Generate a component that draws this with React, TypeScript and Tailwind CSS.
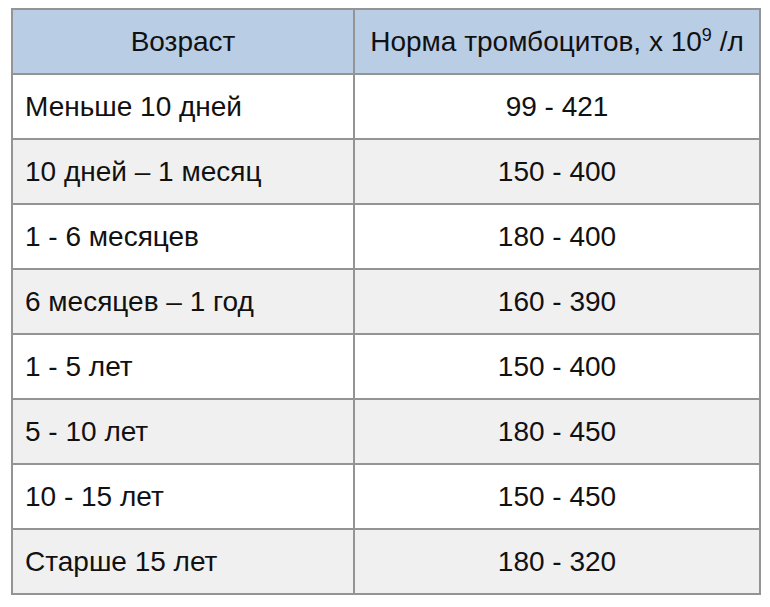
import React from "react";

const rows: [string, string][] = [
  ["Меньше 10 дней", "99 - 421"],
  ["10 дней – 1 месяц", "150 - 400"],
  ["1 - 6 месяцев", "180 - 400"],
  ["6 месяцев – 1 год", "160 - 390"],
  ["1 - 5 лет", "150 - 400"],
  ["5 - 10 лет", "180 - 450"],
  ["10 - 15 лет", "150 - 450"],
  ["Старше 15 лет", "180 - 320"],
];

export default function App() {
  return (
    <div className="w-[770px] h-[607px] bg-white pt-[8px] pl-[11px] text-[#111111]" style={{ fontFamily: '"Liberation Sans", Arial, sans-serif' }}>
      <div className="w-[750px] border-2 border-[#949494]">
        <div className="flex h-[63px] bg-[#b9cde5]">
          <div className="w-[340px] flex items-center justify-center text-[28px]">Возраст</div>
          <div className="flex-1 border-l-2 border-[#949494] flex items-center justify-center text-[28px]">
            <span className="whitespace-nowrap">
              Норма тромбоцитов, х 10<span className="text-[18px] relative -top-[10px]">9</span> /л
            </span>
          </div>
        </div>
        {rows.map(([a, b], i) => (
          <div key={i} className={`flex h-[65px] border-t-2 border-[#949494] ${i % 2 === 1 ? "bg-[#f0f0f0]" : "bg-white"}`}>
            <div className="w-[340px] flex items-center pl-[12px] text-[28px]">{a}</div>
            <div className="flex-1 border-l-2 border-[#949494] flex items-center justify-center text-[28px]">{b}</div>
          </div>
        ))}
      </div>
    </div>
  );
}
